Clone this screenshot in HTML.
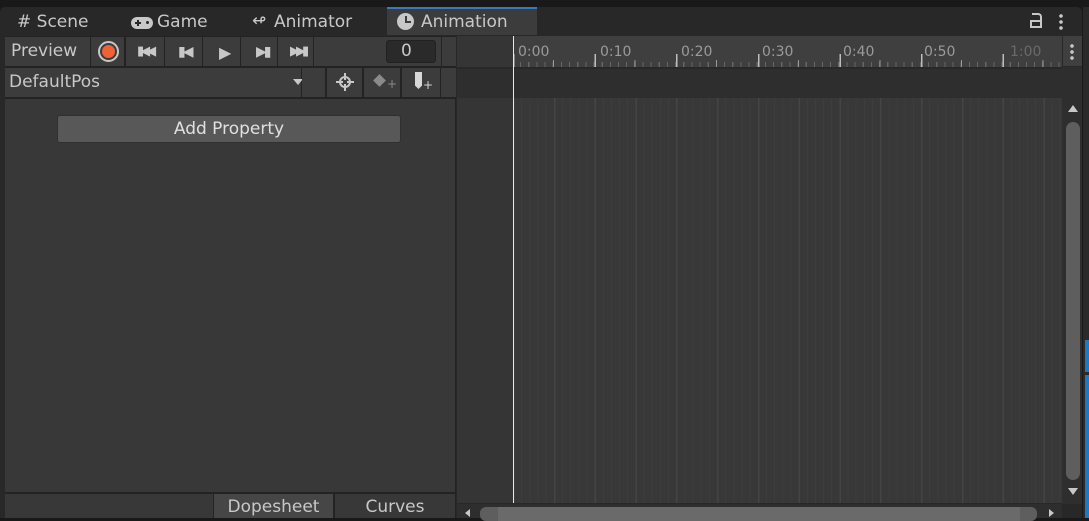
<!DOCTYPE html><html><head><style>
*{margin:0;padding:0;box-sizing:border-box}
body{width:1089px;height:518px;background:#191919;position:relative;overflow:hidden;font-family:"DejaVu Sans","Liberation Sans",sans-serif;color:#d2d2d2}
.a{position:absolute}
.btn{position:absolute;background:#3c3c3c;top:37px;height:29px}
.t{font-size:17px;color:#c8c8c8}
</style></head><body>
<div class="a" style="left:0;top:7px;width:1082px;height:511px;background:#282828;border-radius:5px 5px 0 0"></div>
<div class="a" style="left:1083px;top:7px;width:6px;height:511px;background:#2a2a2a"></div>
<div class="a" style="left:1085px;top:340px;width:4px;height:32px;background:#1a7ac6"></div>
<div class="a" style="left:1085px;top:375px;width:4px;height:143px;background:#1a7ac6"></div>
<!-- tabs -->
<div class="a t" style="left:17px;top:12px">#&nbsp;Scene</div>
<div class="a" style="left:131px;top:17px;width:22px;height:12px;background:#c8c8c8;border-radius:6px"></div>
<div class="a" style="left:135px;top:22px;width:6px;height:2px;background:#282828"></div>
<div class="a" style="left:137px;top:20px;width:2px;height:6px;background:#282828"></div>
<div class="a" style="left:146px;top:21px;width:3px;height:3px;background:#282828;border-radius:50%"></div>
<div class="a t" style="left:157px;top:12px">Game</div>
<div class="a t" style="left:252px;top:11px">&#8619;</div>
<div class="a t" style="left:274px;top:12px">Animator</div>
<div class="a" style="left:387px;top:7px;width:150px;height:28px;background:#3c3c3c;border-top:2px solid #3a79bb"></div>
<div class="a" style="left:397px;top:13px;width:17px;height:17px;border-radius:50%;background:#c8c8c8"></div>
<div class="a" style="left:405px;top:16px;width:2px;height:6px;background:#3c3c3c"></div>
<div class="a" style="left:405px;top:21px;width:6px;height:2px;background:#3c3c3c"></div>
<div class="a t" style="left:421px;top:12px">Animation</div>
<div class="a" style="left:1030px;top:20px;width:12px;height:8px;border:2px solid #c8c8c8"></div>
<div class="a" style="left:1032px;top:13px;width:10px;height:8px;border:2px solid #c8c8c8;border-bottom:none;border-left:none;border-radius:0 4px 0 0"></div>
<div class="a" style="left:1059px;top:13px;width:4px;height:18px;background:radial-gradient(circle,#c8c8c8 1.6px,transparent 2px) 0 0/4px 6px"></div>
<!-- left panel -->
<div class="a" style="left:5px;top:36px;width:451px;height:482px;background:#232323"></div>
<div class="btn" style="left:5px;width:85px"></div><div class="a t" style="left:11px;top:41px">Preview</div>
<div class="btn" style="left:91px;width:33px"></div>
<div class="a" style="left:98px;top:41px;width:21px;height:21px;border-radius:50%;border:2px solid #c8c8c8"></div>
<div class="a" style="left:102px;top:45px;width:13px;height:13px;border-radius:50%;background:#f06236"></div>
<div class="btn" style="left:126px;width:38px"></div><div class="a" style="left:137px;top:44px;font-size:13px;color:#c8c8c8;letter-spacing:-4px">&#9646;&#9664;&#9664;</div>
<div class="btn" style="left:165px;width:37px"></div><div class="a" style="left:178px;top:44px;font-size:14px;color:#c8c8c8;letter-spacing:-3px">&#9646;&#9664;</div>
<div class="btn" style="left:203px;width:37px"></div><div class="a" style="left:219px;top:43px;font-size:16px;color:#c8c8c8">&#9654;</div>
<div class="btn" style="left:241px;width:36px"></div><div class="a" style="left:256px;top:44px;font-size:14px;color:#c8c8c8;letter-spacing:-3px">&#9654;&#9646;</div>
<div class="btn" style="left:278px;width:35px"></div><div class="a" style="left:290px;top:44px;font-size:13px;color:#c8c8c8;letter-spacing:-4px">&#9654;&#9654;&#9646;</div>
<div class="btn" style="left:314px;width:127px"></div>
<div class="a" style="left:386px;top:40px;width:50px;height:23px;background:#2a2a2a;border:1px solid #212121;border-radius:3px"></div>
<div class="a t" style="left:401px;top:41px">0</div>
<div class="btn" style="left:442px;width:14px"></div>
<!-- row 2 -->
<div class="a" style="left:5px;top:68px;width:296px;height:29px;background:#3c3c3c"></div>
<div class="a t" style="left:9px;top:72px">DefaultPos</div>
<div class="a" style="left:293px;top:79px;border:5px solid transparent;border-top:6px solid #c8c8c8"></div>
<div class="a" style="left:302px;top:68px;width:23px;height:29px;background:#3c3c3c"></div>
<div class="a" style="left:327px;top:68px;width:35px;height:29px;background:#3c3c3c"></div>
<div class="a" style="left:339px;top:76px;width:12px;height:12px;border:2px solid #c8c8c8;border-radius:50%"></div>
<div class="a" style="left:344px;top:73px;width:2px;height:18px;background:#c8c8c8"></div>
<div class="a" style="left:336px;top:81px;width:18px;height:2px;background:#c8c8c8"></div>
<div class="a" style="left:343px;top:80px;width:4px;height:4px;background:#3c3c3c"></div>
<div class="a" style="left:364px;top:68px;width:36px;height:29px;background:#3c3c3c"></div>
<div class="a" style="left:375px;top:76px;width:9px;height:9px;background:#8a8a8a;transform:rotate(45deg)"></div>
<div class="a" style="left:387px;top:77px;font-size:12px;color:#8a8a8a">+</div>
<div class="a" style="left:402px;top:68px;width:38px;height:29px;background:#3c3c3c"></div>
<div class="a" style="left:415px;top:72px;width:7px;height:17px;background:#d8d8d8;clip-path:polygon(0 0,100% 0,100% 80%,50% 100%,0 80%)"></div>
<div class="a" style="left:423px;top:78px;font-size:12px;color:#d8d8d8">+</div>
<div class="a" style="left:441px;top:68px;width:15px;height:29px;background:#3c3c3c"></div>
<div class="a" style="left:5px;top:99px;width:450px;height:393px;background:#383838"></div>
<div class="a" style="left:57px;top:115px;width:344px;height:28px;background:#585858;border:1px solid #303030;border-radius:3px;text-align:center;font-size:17px;line-height:26px;color:#e0e0e0">Add Property</div>
<div class="a" style="left:5px;top:494px;width:208px;height:24px;background:#383838"></div>
<div class="a" style="left:214px;top:494px;width:119px;height:24px;background:#464646;text-align:center;font-size:17px;line-height:27px;color:#c8c8c8">Dopesheet</div>
<div class="a" style="left:335px;top:494px;width:120px;height:24px;background:#383838;text-align:center;font-size:17px;line-height:27px;color:#c8c8c8">Curves</div>
<!-- timeline -->
<div class="a" style="left:457px;top:36px;width:605px;height:31px;background:#353535"></div>
<div class="a" style="left:513px;top:36px;width:549px;height:31px;background:#3f3f3f"></div>
<div class="a" style="left:513px;top:62px;width:549px;height:5px;background:repeating-linear-gradient(90deg,transparent 0 7px,#666 7px 8.16px)"></div>
<div class="a" style="left:513px;top:36px;width:549px;height:31px;font-size:14px;color:#9a9a9a">
<span class="a" style="left:5px;top:8px">0:00</span><span class="a" style="left:87px;top:8px">0:10</span><span class="a" style="left:168px;top:8px">0:20</span><span class="a" style="left:249px;top:8px">0:30</span><span class="a" style="left:330px;top:8px">0:40</span><span class="a" style="left:411px;top:8px">0:50</span><span class="a" style="left:497px;top:8px;color:#6a6a6a">1:00</span></div>
<div class="a" style="left:513px;top:36px;width:549px;height:31px;background:repeating-linear-gradient(90deg,#bdbdbd 0 1.5px,transparent 1.5px 81.6px) 0 18px/549px 13px no-repeat"></div>
<div class="a" style="left:553px;top:36px;width:509px;height:31px;background:repeating-linear-gradient(90deg,#999 0 1px,transparent 1px 81.6px) 0 24px/509px 7px no-repeat"></div>
<div class="a" style="left:1063px;top:36px;width:19px;height:30px;background:#3f3f3f"></div>
<div class="a" style="left:1070px;top:43px;width:4px;height:18px;background:radial-gradient(circle,#c8c8c8 1.6px,transparent 2px) 0 0/4px 6px"></div>
<div class="a" style="left:457px;top:69px;width:605px;height:29px;background:#2e2e2e"></div>
<div class="a" style="left:457px;top:98px;width:605px;height:405px;background:#353535"></div>
<div class="a" style="left:513px;top:98px;width:549px;height:405px;background:repeating-linear-gradient(90deg,#3d3d3d 0 1px,transparent 1px 8.16px),#383838"></div>
<div class="a" style="left:513px;top:98px;width:549px;height:405px;background:repeating-linear-gradient(90deg,#444 0 1.5px,transparent 1.5px 40.8px)"></div>
<div class="a" style="left:513px;top:36px;width:1px;height:467px;background:#e8e8e8"></div>
<!-- vscroll -->
<div class="a" style="left:1062px;top:67px;width:20px;height:437px;background:#2e2e2e"></div>
<div class="a" style="left:1068px;top:105px;border:5px solid transparent;border-bottom:7px solid #c8c8c8;border-top:none"></div>
<div class="a" style="left:1066px;top:122px;width:14px;height:358px;background:#5e5e5e;border-radius:7px"></div>
<div class="a" style="left:1068px;top:488px;border:5px solid transparent;border-top:7px solid #c8c8c8;border-bottom:none"></div>
<!-- hscroll -->
<div class="a" style="left:457px;top:504px;width:605px;height:14px;background:#2e2e2e"></div>
<div class="a" style="left:465px;top:509px;border:4px solid transparent;border-right:5px solid #c8c8c8;border-left:none"></div>
<div class="a" style="left:480px;top:507px;width:557px;height:14px;background:#5e5e5e;border-radius:6px"></div>
<div class="a" style="left:498px;top:507px;width:522px;height:14px;background:#6a6a6a"></div>
<div class="a" style="left:1049px;top:509px;border:4px solid transparent;border-left:5px solid #c8c8c8;border-right:none"></div>
</body></html>
